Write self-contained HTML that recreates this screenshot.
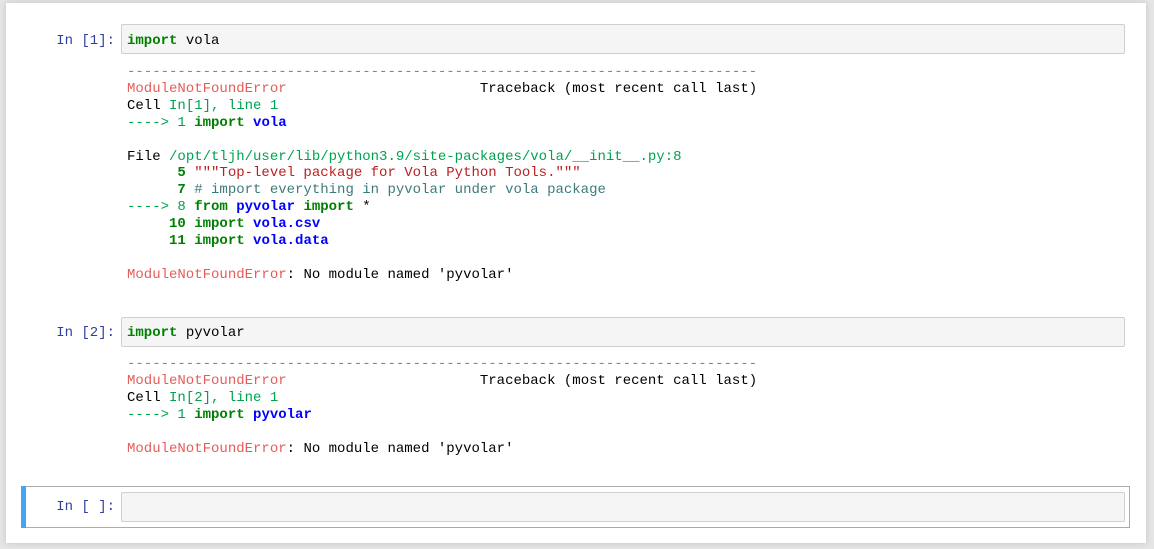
<!DOCTYPE html>
<html><head><meta charset="utf-8"><style>
html,body{margin:0;padding:0;background:#e5e5e5;width:1154px;height:549px;overflow:hidden}
#panel{position:absolute;left:6px;top:3px;width:1140px;height:540px;background:#fff;box-shadow:0 0 6px rgba(0,0,0,.15)}
.m{font-family:"Liberation Mono",monospace;font-size:14px;white-space:pre;position:absolute;margin:0}
.prompt{color:#303f9f;text-align:right;width:100px;left:15px}
.inp{position:absolute;left:121px;width:1002px;height:28px;background:#f5f5f5;border:1px solid #cfcfcf;border-radius:2px}
.out{left:127px;line-height:16.9px;color:#000}
.r{color:#e75c58}.g{color:#00a250}.k{color:#008000;font-weight:bold}.b{color:#0000ff;font-weight:bold}.s{color:#ba2121}.c{color:#3d7b7b}
</style></head><body>
<div id="panel"></div>
<div class="m prompt" style="top:33px">In [1]:</div>
<div class="inp" style="top:24px"></div>
<div class="m" style="left:127px;top:33px"><span class="k">import</span> vola</div>
<div class="m out" style="top:64px"><span class="r">---------------------------------------------------------------------------</span>
<span class="r">ModuleNotFoundError</span>                       Traceback (most recent call last)
Cell <span class="g">In[1], line 1</span>
<span class="g">----&gt; 1</span> <span class="k">import</span> <span class="b">vola</span>

File <span class="g">/opt/tljh/user/lib/python3.9/site-packages/vola/__init__.py:8</span>
<span class="k">      5</span> <span class="s">"""Top-level package for Vola Python Tools."""</span>
<span class="k">      7</span> <span class="c"># import everything in pyvolar under vola package</span>
<span class="g">----&gt; 8</span> <span class="k">from</span> <span class="b">pyvolar</span> <span class="k">import</span> *
<span class="k">     10</span> <span class="k">import</span> <span class="b">vola.csv</span>
<span class="k">     11</span> <span class="k">import</span> <span class="b">vola.data</span>

<span class="r">ModuleNotFoundError</span>: No module named 'pyvolar'</div>
<div class="m prompt" style="top:325px">In [2]:</div>
<div class="inp" style="top:317px"></div>
<div class="m" style="left:127px;top:325px"><span class="k">import</span> pyvolar</div>
<div class="m out" style="top:356px"><span class="r">---------------------------------------------------------------------------</span>
<span class="r">ModuleNotFoundError</span>                       Traceback (most recent call last)
Cell <span class="g">In[2], line 1</span>
<span class="g">----&gt; 1</span> <span class="k">import</span> <span class="b">pyvolar</span>

<span class="r">ModuleNotFoundError</span>: No module named 'pyvolar'</div>
<div style="position:absolute;left:21px;top:486px;width:1108px;height:40px;border:1px solid #ababab;border-left:none"></div>
<div style="position:absolute;left:21px;top:486px;width:5px;height:42px;background:#42a5f5"></div>
<div class="m prompt" style="top:499px">In [ ]:</div>
<div class="inp" style="top:492px"></div>
</body></html>
